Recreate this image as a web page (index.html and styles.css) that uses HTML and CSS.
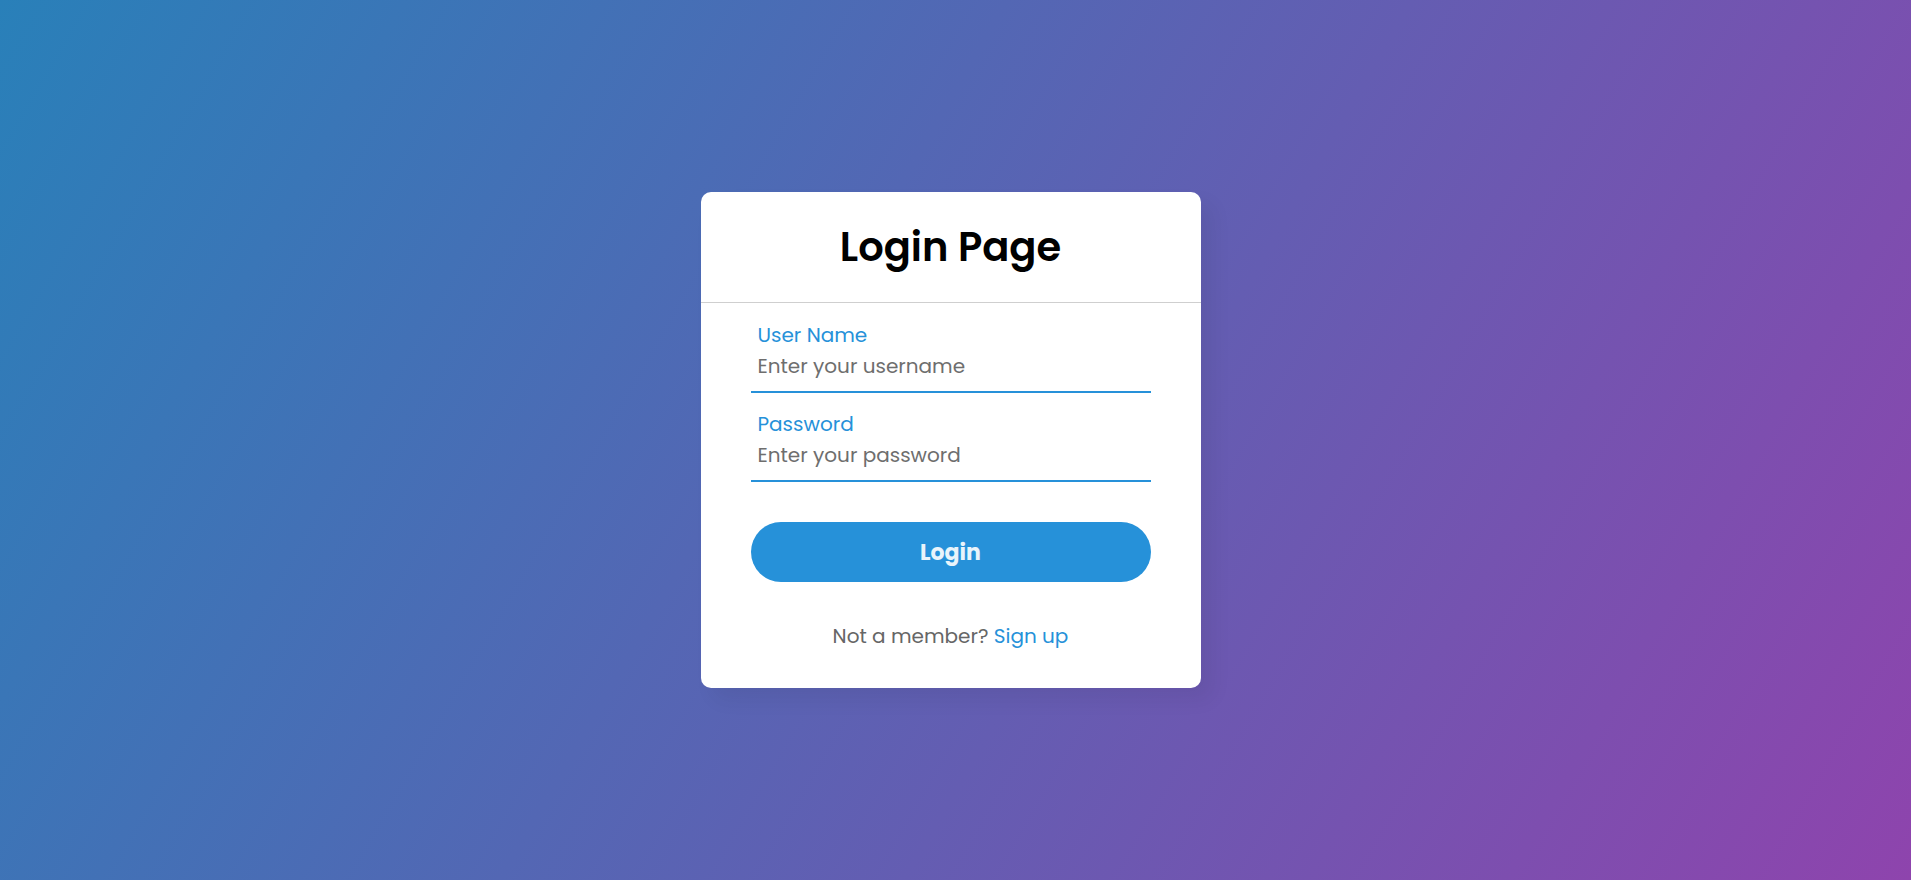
FILE: index.html
```html
<!DOCTYPE html>
<html lang="en">

<head>
    <meta charset="UTF-8">
    <meta name="viewport" content="width=device-width, initial-scale=1.0">
    <title>Login Page</title>
    <link rel="stylesheet" href="styles.css">
</head>

<body>
    <div class="card">
        <h1>Login Page</h1>
        <form class="login-form" onsubmit="event.preventDefault()">
            <div class="field">
                <label for="username">User Name</label>
                <input id="username" type="text" placeholder="Enter your username" required />
            </div>
            <div class="field">
                <label for="password">Password</label>
                <input id="password" type="password" placeholder="Enter your password" required />
            </div>
            <button class="btn-login">Login</button>
            <div class="signup">
                Not a member? <a href="#">Sign up</a>
            </div>
        </form>
    </div>
</body>

</html>
```

FILE: styles.css
```css
* {
    box-sizing: border-box;
    font-family: 'Poppins', 'Open Sans', sans-serif;
}

body,
html {
    margin: 0;
    height: 100%;
}

body {
    display: flex;
    align-items: center;
    justify-content: center;
    padding-right: 10px;
    background: linear-gradient(120deg, #2980b9, #8e44ad);
}

.card {
    width: 500px;
    background-color: white;
    border-radius: 10px;
    box-shadow: 12px 12px 20px rgba(0, 0, 0, 0.06);
}

.card h1 {
    margin: 0;
    padding: 25px 0 25px;
    font-size: 40px;
    line-height: 60px;
    font-weight: 600;
    color: #000;
    text-align: center;
    border-bottom: 1px solid #cfcfcf;
}

.login-form {
    padding: 0 50px 39px;
}

.field {
    margin-top: 19px;
    padding: 0 7px 7px;
    border-bottom: 2px solid #2691d9;
}

.field + .field {
    margin-top: 18px;
}

.field label {
    display: block;
    font-size: 20px;
    line-height: 26px;
    color: #2691d9;
}

.field input {
    display: block;
    width: 100%;
    height: 36px;
    padding: 0;
    border: 0;
    outline: none;
    background: none;
    font-size: 20px;
    color: #333;
}

.field input::placeholder {
    color: #6e6e6e;
}

.btn-login {
    display: block;
    width: 100%;
    height: 60px;
    margin-top: 40px;
    border: 0;
    border-radius: 30px;
    background-color: #2691d9;
    color: #e9f4fb;
    font-size: 22px;
    font-weight: 700;
    cursor: pointer;
}

.btn-login:hover {
    background-color: #2580c3;
}

.signup {
    margin-top: 41px;
    font-size: 20px;
    line-height: 26px;
    color: #666;
    text-align: center;
}

.signup a {
    color: #2691d9;
    text-decoration: none;
}

.signup a:hover {
    text-decoration: underline;
}
```
